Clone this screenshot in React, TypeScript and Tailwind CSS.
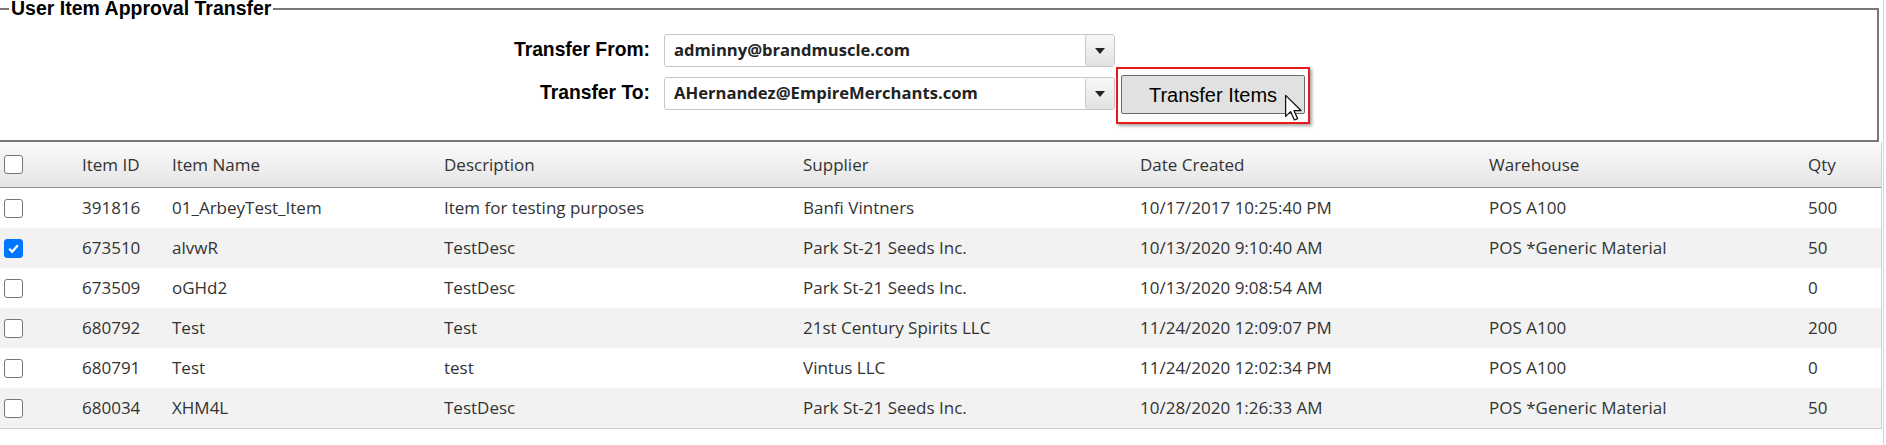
import React from "react";

interface ItemRow {
  id: string;
  name: string;
  desc: string;
  supplier: string;
  date: string;
  warehouse: string;
  qty: string;
  checked?: boolean;
}

const items: ItemRow[] = [
  { id: "391816", name: "01_ArbeyTest_Item", desc: "Item for testing purposes", supplier: "Banfi Vintners", date: "10/17/2017 10:25:40 PM", warehouse: "POS A100", qty: "500" },
  { id: "673510", name: "alvwR", desc: "TestDesc", supplier: "Park St-21 Seeds Inc.", date: "10/13/2020 9:10:40 AM", warehouse: "POS *Generic Material", qty: "50", checked: true },
  { id: "673509", name: "oGHd2", desc: "TestDesc", supplier: "Park St-21 Seeds Inc.", date: "10/13/2020 9:08:54 AM", warehouse: "", qty: "0" },
  { id: "680792", name: "Test", desc: "Test", supplier: "21st Century Spirits LLC", date: "11/24/2020 12:09:07 PM", warehouse: "POS A100", qty: "200" },
  { id: "680791", name: "Test", desc: "test", supplier: "Vintus LLC", date: "11/24/2020 12:02:34 PM", warehouse: "POS A100", qty: "0" },
  { id: "680034", name: "XHM4L", desc: "TestDesc", supplier: "Park St-21 Seeds Inc.", date: "10/28/2020 1:26:33 AM", warehouse: "POS *Generic Material", qty: "50" },
];

const gridCols = "grid grid-cols-[74px_90px_272px_359px_337px_349px_319px_1fr] items-center";

const Checkbox = ({ checked }: { checked?: boolean }) => (
  <span
    className={`flex h-[19px] w-[19px] items-center justify-center rounded-[3px] border ${
      checked ? "border-[#0075ff] bg-[#0075ff]" : "border-[#767676] bg-white"
    }`}
  >
    {checked && (
      <svg width="13" height="13" viewBox="0 0 13 13">
        <path d="M2.2 6.8 L5.2 9.8 L10.8 3.2" stroke="white" strokeWidth="2.2" fill="none" />
      </svg>
    )}
  </span>
);

const Select = ({ value }: { value: string }) => (
  <div className="ml-[14px] flex h-[33px] w-[451px] rounded-[3px] border border-[#c6c6c6] bg-white">
    <div className="flex flex-1 items-center pl-[9px] font-['Open_Sans'] text-[16.6px] font-bold text-[#222]">
      {value}
    </div>
    <div className="flex w-[29px] items-center justify-center rounded-[3px] border-l border-[#c6c6c6] bg-linear-to-b from-[#f8f8f8] to-[#e2e2e2]">
      <span className="h-0 w-0 border-x-[5px] border-t-[6px] border-x-transparent border-t-[#222]" />
    </div>
  </div>
);

export default function App() {
  return (
    <div className="h-[445px] w-[1884px] overflow-hidden border-r border-[#d6d6d6] bg-white">
      <fieldset className="-ml-[3px] w-[1882px] border-2 border-[#777] pb-[30px] pl-[10px]">
        <legend className="px-[2px] font-['Liberation_Sans'] text-[19.5px] font-bold leading-[17px] text-black">
          User Item Approval Transfer
        </legend>
        <div className="mt-[17px] ml-[500px] flex flex-col gap-[10px] font-['Liberation_Sans'] text-[19.3px] font-bold text-black">
          <div className="flex items-center">
            <div className="w-[141px] text-right">Transfer From:</div>
            <Select value="adminny@brandmuscle.com" />
          </div>
          <div className="flex items-center">
            <div className="w-[141px] text-right">Transfer To:</div>
            <Select value="AHernandez@EmpireMerchants.com" />
            <div className="relative mt-[-10px] mb-[-14px] ml-[1px] self-start border-2 border-[#e41b1b] px-[3px] pt-[6px] pb-[8px] shadow-[2px_2px_3px_rgba(0,0,0,0.35)]">
              <button className="h-[39px] w-[184px] rounded-[2px] border border-[#6a6a6a] bg-[#e1e1e1] font-['Liberation_Sans'] text-[20px] font-normal text-black">
                Transfer Items
              </button>
              <svg className="absolute left-[166px] top-[25px]" width="20" height="28" viewBox="0 0 14 20">
                <path
                  d="M1 1 L1 16 L4.6 12.6 L7.3 18.6 L9.6 17.6 L7 11.8 L12 11.8 Z"
                  fill="white"
                  stroke="#111"
                  strokeWidth="0.9"
                  strokeLinejoin="round"
                />
              </svg>
            </div>
          </div>
        </div>
      </fieldset>

      <div className="w-[1882px] border-r border-b border-[#cfcfcf] font-['Open_Sans'] text-[17px] text-[#333]">
        <div className={`${gridCols} h-[46px] border-b border-[#8c8c8c] bg-linear-to-b from-[#fbfbfb] to-[#e5e5e5]`}>
          <div className="pl-[4px]">
            <Checkbox />
          </div>
          <div className="pl-[8px]">Item ID</div>
          <div className="pl-[8px]">Item Name</div>
          <div className="pl-[8px]">Description</div>
          <div className="pl-[8px]">Supplier</div>
          <div className="pl-[8px]">Date Created</div>
          <div className="pl-[8px]">Warehouse</div>
          <div className="pl-[8px]">Qty</div>
        </div>
        {items.map((row, i) => (
          <div key={row.id} className={`${gridCols} h-[40px] ${i % 2 === 1 ? "bg-[#f2f2f2]" : "bg-white"}`}>
            <div className="pl-[4px]">
              <Checkbox checked={row.checked} />
            </div>
            <div className="pl-[8px]">{row.id}</div>
            <div className="pl-[8px]">{row.name}</div>
            <div className="pl-[8px]">{row.desc}</div>
            <div className="pl-[8px]">{row.supplier}</div>
            <div className="pl-[8px]">{row.date}</div>
            <div className="pl-[8px]">{row.warehouse}</div>
            <div className="pl-[8px]">{row.qty}</div>
          </div>
        ))}
      </div>
    </div>
  );
}
